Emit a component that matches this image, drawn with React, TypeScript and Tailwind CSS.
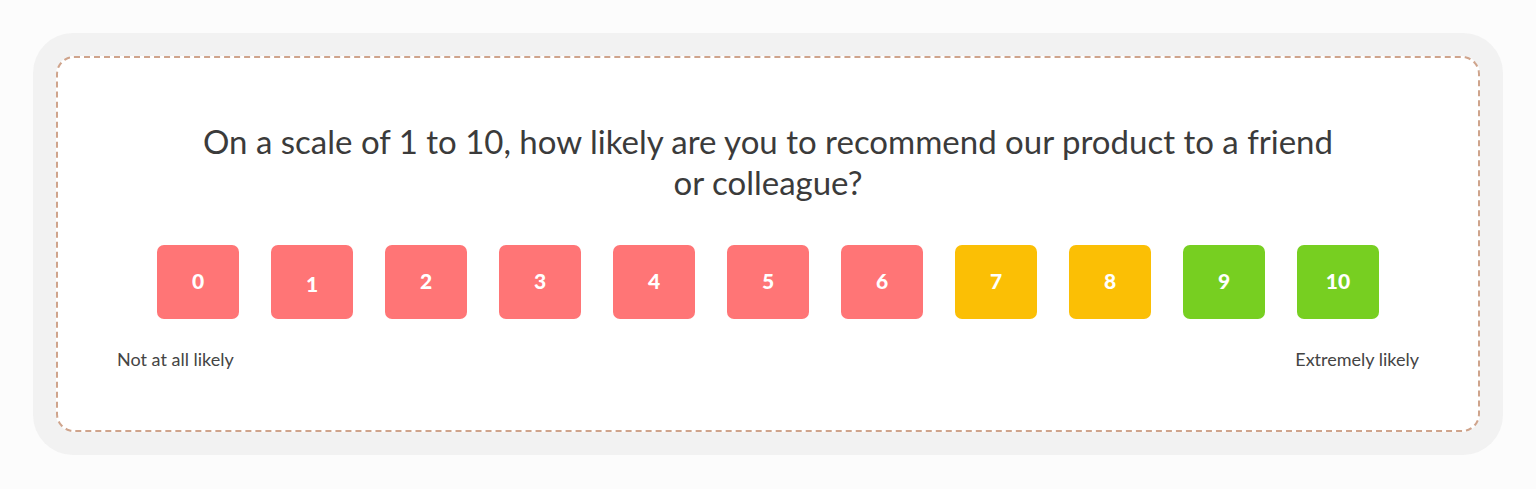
import React from "react";

const scores = [0, 1, 2, 3, 4, 5, 6, 7, 8, 9, 10];

const colorFor = (n: number) => {
  if (n <= 6) return "bg-[#ff7576]";
  if (n <= 8) return "bg-[#fbbf05]";
  return "bg-[#77cf21]";
};

export default function App() {
  return (
    <div className="min-h-screen bg-[#fcfcfc] p-[33px] font-['Lato',sans-serif]">
      <div className="rounded-[40px] bg-[#f2f2f2] p-[23px]">
        <div className="rounded-[18px] border-2 border-dashed border-[#cfa48c] bg-white px-[59px] pt-[63px] pb-[59px]">
          {/* Question */}
          <h2 className="mx-auto max-w-[1140px] text-center text-[33px] leading-[41px] font-normal text-[#3b3b3b]">
            On a scale of 1 to 10, how likely are you to recommend our product to a friend or colleague?
          </h2>

          {/* Score buttons */}
          <div className="mt-[42px] flex justify-center gap-[32px]">
            {scores.map((n) => (
              <button
                key={n}
                className={`flex h-[74px] w-[82px] items-center justify-center rounded-[7px] pb-[3px] text-[21px] font-black text-white ${colorFor(n)} ${n === 1 ? "pt-[6px] pb-0" : ""}`}
              >
                {n}
              </button>
            ))}
          </div>

          {/* Labels */}
          <div className="mt-[28px] flex justify-between text-[18px] leading-[24px] text-[#444444]">
            <span>Not at all likely</span>
            <span>Extremely likely</span>
          </div>
        </div>
      </div>
    </div>
  );
}
